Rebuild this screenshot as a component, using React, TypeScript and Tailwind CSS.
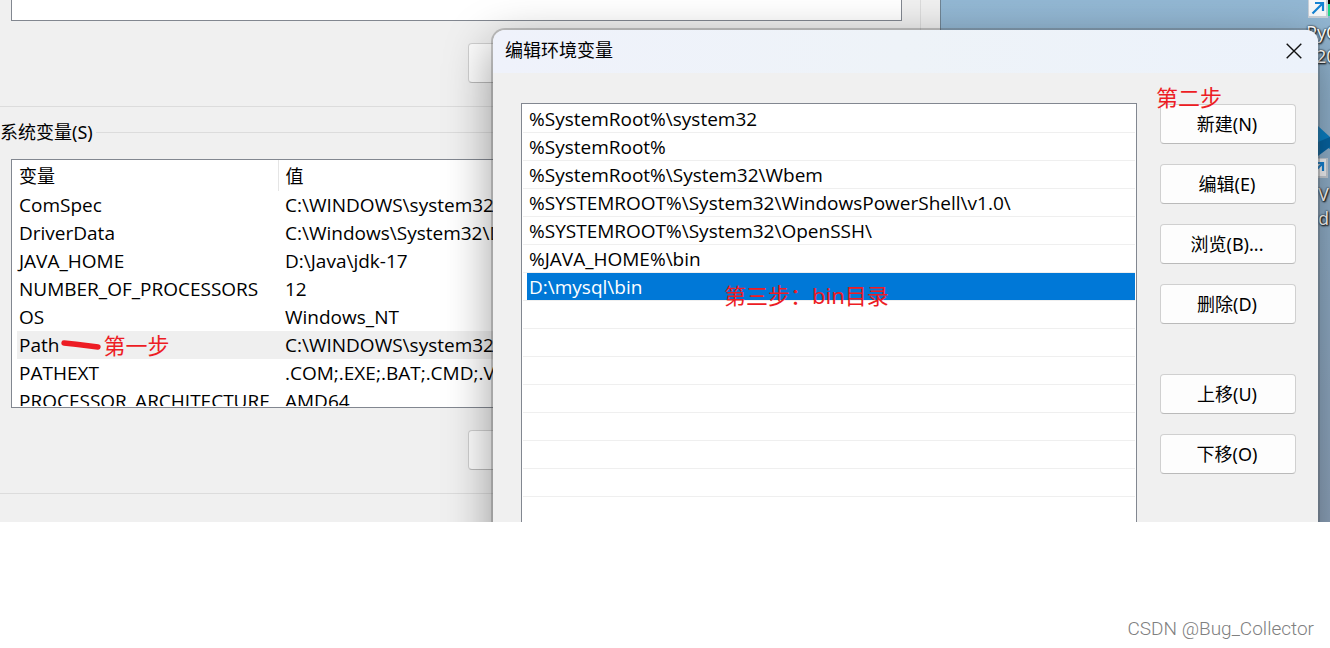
import React from 'react'

type Variable = {
    name: string;
    value: string;
    active?: boolean;
};

const variables: Variable[] = [
    { name: 'ComSpec', value: 'C:\\WINDOWS\\system32\\' },
    { name: 'DriverData', value: 'C:\\Windows\\System32\\D' },
    { name: 'JAVA_HOME', value: 'D:\\Java\\jdk-17' },
    { name: 'NUMBER_OF_PROCESSORS', value: '12' },
    { name: 'OS', value: 'Windows_NT' },
    { name: 'Path', value: 'C:\\WINDOWS\\system32;', active: true },
    { name: 'PATHEXT', value: '.COM;.EXE;.BAT;.CMD;.VB' },
    { name: 'PROCESSOR_ARCHITECTURE', value: 'AMD64' },
];

const paths = [
    '%SystemRoot%\\system32',
    '%SystemRoot%',
    '%SystemRoot%\\System32\\Wbem',
    '%SYSTEMROOT%\\System32\\WindowsPowerShell\\v1.0\\',
    '%SYSTEMROOT%\\System32\\OpenSSH\\',
    '%JAVA_HOME%\\bin',
    'D:\\mysql\\bin',
    '', '', '', '', '', '', '',
];

const Button = ({ children, label }: { children?: React.ReactNode; label?: string }) => {
    return (
        <button aria-label={label} className="block h-10 w-[136px] shrink-0 rounded border border-[#d0d0d0] border-b-[#bababa] bg-[#fdfdfd] pr-0.5 text-center">
            {children}
        </button>
    )
}

const Note = ({ children }: { children: React.ReactNode }) => {
    return <span className="whitespace-nowrap text-[22px] leading-7 text-[#ed1c24]">{children}</span>
}

const ShortcutBadge = () => {
    return (
        <svg className="block" width="20" height="20" viewBox="0 0 20 20">
            <rect width="20" height="20" fill="#c9d0d8" />
            <rect x="1" y="1" width="17" height="17" fill="#f6f7f9" />
            <path d="M4.5 15.5 14 6M7 5h8v8" fill="none" stroke="#1583d4" strokeWidth="2.2" />
        </svg>
    )
}

const DesktopIcons = () => {
    return (
        <div className="absolute -top-0.5 right-0 w-[22px] text-white [text-shadow:1px_1px_2px_#000,0_0_2px_#000]">
            <div className="flex h-[126px] flex-col">
                <div className="flex">
                    <ShortcutBadge />
                    <svg width="2" height="20" viewBox="0 0 2 20">
                        <rect width="2" height="6" fill="#000" />
                        <rect y="6" width="2" height="12" fill="#21d789" />
                    </svg>
                </div>
                <span className="-ml-0.5 mt-0.5 block leading-6">PyC</span>
                <span className="ml-2 block leading-6">20</span>
            </div>
            <svg className="block" width="22" height="34" viewBox="0 0 22 34">
                <path d="M10 2 22 13v12L10 18z" fill="#0a82c8" />
                <path d="M10 18 22 13v10L10 32z" fill="#0666a5" />
            </svg>
            <ShortcutBadge />
            <span className="ml-2.5 mt-1 block leading-6">V</span>
            <span className="ml-2.5 block leading-6">d</span>
        </div>
    )
}

const VariablesWindow = () => {
    return (
        <div className="absolute left-0 top-0 h-full w-[941px] border-r border-[#6f8494] bg-[#f0f0f0] pr-[19px]">
            <div className="h-[107px] border-b border-r border-[#dcdcdc] pl-[11px] pr-[18px]">
                <div className="h-[21px] border-x border-b border-[#828790] bg-white" />
                <div className="ml-[457px] mt-[22px]">
                    <Button label="新建" />
                </div>
            </div>
            <fieldset className="mt-[13px] h-[374px] min-w-0 border-b border-r border-t border-[#dcdcdc] pl-[11px] pr-[18px]">
                <legend className="-ml-[11px] pr-[3px] leading-6">系统变量(S)</legend>
                <div className="mt-[15px] h-[249px] border border-[#828790] bg-white pb-px pl-[5px]">
                    <div className="h-full overflow-hidden">
                        <table className="w-full table-fixed border-collapse text-left">
                            <thead>
                                <tr className="h-[31px]">
                                    <th className="w-[261px] border-r border-[#e5e5e5] p-0 pl-0.5 pt-0.5 font-normal">变量</th>
                                    <th className="p-0 pl-[7px] pt-0.5 font-normal">值</th>
                                </tr>
                            </thead>
                            <tbody className="font-['Open_Sans','Noto_Sans_CJK_SC',sans-serif] text-[19px]">
                                {variables.map((item) => (
                                    <tr key={item.name} className={item.active ? 'bg-[#efefef]' : ''}>
                                        <td className="p-0 pl-0.5">
                                            <div className="flex h-7 items-center gap-0.5">
                                                {item.name}
                                                {item.active && (
                                                    <>
                                                        <svg width="40" height="12" viewBox="0 0 40 12">
                                                            <path d="M3 4 15 5.2 37 8" fill="none" stroke="#ed1c24" strokeWidth="5.4" strokeLinecap="round" />
                                                        </svg>
                                                        <Note>第一步</Note>
                                                    </>
                                                )}
                                            </div>
                                        </td>
                                        <td className="whitespace-nowrap p-0 pl-[7px] leading-7">{item.value}</td>
                                    </tr>
                                ))}
                            </tbody>
                        </table>
                    </div>
                </div>
                <div className="ml-[457px] mt-[22px]">
                    <Button label="新建" />
                </div>
            </fieldset>
        </div>
    )
}

const EditDialog = () => {
    return (
        <div role="dialog" aria-label="编辑环境变量" className="absolute -bottom-20 left-[493px] right-3 top-[30px] flex flex-col rounded-t-xl bg-[#f0f0f0] shadow-[0_0_0_2px_rgba(80,80,80,0.3),0_14px_48px_rgba(0,0,0,0.4)]">
            <div className="flex h-[43px] shrink-0 items-center justify-between rounded-t-xl bg-linear-to-r from-[#eff2fb] via-[#eef3f8] to-[#ecf2fb] pb-0.5 pl-3 pr-4">
                <h1>编辑环境变量</h1>
                <button aria-label="关闭" className="size-4">
                    <svg width="16" height="16" viewBox="0 0 16 16">
                        <path d="M.7.7l14.6 14.6M15.3.7.7 15.3" stroke="#111" strokeWidth="1.4" />
                    </svg>
                </button>
            </div>
            <div className="flex min-h-0 flex-1 gap-[23px] pl-7 pr-[22px] pt-[30px]">
                <ul className="min-w-0 flex-1 border border-[#828790] bg-white p-px font-['Open_Sans',sans-serif] text-[19px]">
                    {paths.map((path, index) => (
                        <li key={index} className="h-7 border-b border-[#efefef] pl-1 leading-7">
                            {index === 6 ? (
                                <div className="relative h-[27px] bg-[#0078d7] pl-0.5 text-white">
                                    {path}
                                    <div className="absolute left-[197px] top-2 font-['Noto_Sans','Noto_Sans_CJK_SC',sans-serif]">
                                        <Note>第三步：bin目录</Note>
                                    </div>
                                </div>
                            ) : (
                                <div className="pl-0.5">{path}</div>
                            )}
                        </li>
                    ))}
                </ul>
                <div className="relative flex flex-col gap-5 pt-px">
                    <Button>新建(N)</Button>
                    <Button>编辑(E)</Button>
                    <Button>浏览(B)...</Button>
                    <Button>删除(D)</Button>
                    <div className="mt-[30px]">
                        <Button>上移(U)</Button>
                    </div>
                    <Button>下移(O)</Button>
                    <div className="absolute -left-1 -top-5">
                        <Note>第二步</Note>
                    </div>
                </div>
            </div>
        </div>
    )
}

const App = () => {
    return (
        <main className="min-h-screen bg-white font-['Noto_Sans','Noto_Sans_CJK_SC',sans-serif] text-[18px] text-black">
            <div className="relative h-[522px] overflow-hidden bg-linear-to-b from-[#93b8d4] to-[#8ea4bc]">
                <DesktopIcons />
                <VariablesWindow />
                <EditDialog />
            </div>
            <footer className="flex justify-end px-4 pt-[95px] font-['Roboto',sans-serif] text-[19px] font-light leading-6 text-[#808080]">
                CSDN @Bug_Collector
            </footer>
        </main>
    )
}

export default App
